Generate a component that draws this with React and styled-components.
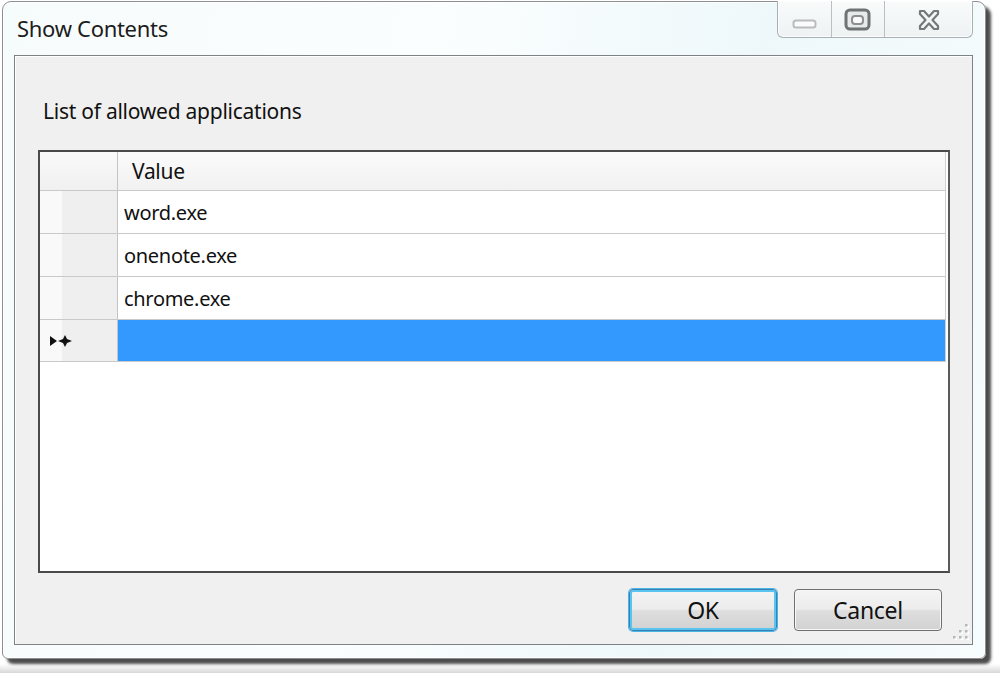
import React from 'react'
import styled, { createGlobalStyle } from 'styled-components'

const Global = createGlobalStyle`
  html, body {
    margin: 0;
    padding: 0;
    background: #ffffff;
    width: 1000px;
    height: 673px;
    overflow: hidden;
    font-family: "Open Sans", "Noto Sans", sans-serif;
  }
`

const Page = styled.div`
  width: 1000px;
  height: 673px;
  padding: 1px 0 0 2px;
  box-sizing: border-box;
  background: linear-gradient(to bottom, #ffffff 0, #ffffff 664px, #d8d8d8 673px);
`

const Frame = styled.div`
  width: 984px;
  height: 658px;
  box-sizing: border-box;
  border: 1px solid #8c8f92;
  border-radius: 9px 9px 6px 6px;
  background: linear-gradient(100deg, #f6fbfc 0%, #fbfeff 40%, #eef8fa 70%, #f7fcfd 100%);
  box-shadow: 5px 5px 3px rgba(0, 0, 0, 0.7), inset 0 0 0 1px #ffffff;
  display: flex;
  flex-direction: column;
  padding: 0 12px 13px 11px;
`

const TitleBar = styled.div`
  height: 53px;
  display: flex;
  align-items: flex-start;
  justify-content: space-between;
`

const Title = styled.div`
  padding: 12px 0 0 3px;
  font-family: "Noto Sans", "Open Sans", sans-serif;
  font-size: 22px;
  line-height: 28px;
  color: #1c1c1c;
  letter-spacing: -0.3px;
  text-shadow: 0 0 6px rgba(255, 255, 255, 0.9);
`

const Caption = styled.div`
  display: flex;
  height: 36px;
  margin-top: -1px;
  border: 1px solid #a9b0b4;
  border-top: none;
  border-radius: 0 0 6px 6px;
  background: linear-gradient(to bottom, #f9fbfb, #eef2f3);
  box-shadow: inset 0 0 0 1px rgba(255, 255, 255, 0.8);
  overflow: hidden;
`

const CapButton = styled.div`
  width: ${({ w }) => w}px;
  height: 100%;
  display: flex;
  align-items: center;
  justify-content: center;
  padding-top: ${({ low }) => (low ? '10px' : '1px')};
  box-sizing: border-box;
  border-left: ${({ first }) => (first ? 'none' : '1px solid #b9bfc2')};
`

const Client = styled.div`
  flex: 1;
  position: relative;
  background: #f0f0f0;
  border: 1px solid #7e8286;
  box-shadow: inset 1px 1px 0 #ffffff;
  display: flex;
  flex-direction: column;
  padding: 0 22px 12px 23px;
  font-family: "Noto Sans", "Open Sans", sans-serif;
`

const Label = styled.div`
  margin: 41px 0 0 5px;
  font-size: 21px;
  line-height: 28px;
  color: #111;
  letter-spacing: -0.25px;
`

const Grid = styled.div`
  margin-top: 25px;
  height: 423px;
  box-sizing: border-box;
  border: 2px solid #4a4a4a;
  border-right-color: #5a5a5a;
  background: #ffffff;
  display: flex;
  flex-direction: column;
  padding-right: 2px;
`

const Row = styled.div`
  display: flex;
  height: ${({ h }) => h}px;
  border-bottom: 1px solid #c9c9c9;
  box-sizing: border-box;
`

const RowHead = styled.div`
  width: 78px;
  flex: none;
  border-right: 1px solid #c4c4c4;
  background: ${({ header }) =>
    header
      ? 'linear-gradient(to bottom, #fafafa, #f0f0f0)'
      : 'linear-gradient(to right, #f9f9f9 0, #f9f9f9 22px, #efefef 22px)'};
  display: flex;
  align-items: center;
  padding-left: 9px;
  box-sizing: border-box;
`

const Cell = styled.div`
  flex: 1;
  display: flex;
  align-items: center;
  padding-left: ${({ header }) => (header ? '14px' : '6px')};
  font-size: ${({ header }) => (header ? '21px' : '20px')};
  letter-spacing: -0.3px;
  color: #111;
  background: ${({ selected, header }) =>
    selected ? '#3399ff' : header ? 'linear-gradient(to bottom, #fbfbfb, #f1f1f1)' : '#ffffff'};
  border-right: 1px solid #d0d0d0;
`

const Buttons = styled.div`
  margin-top: 16px;
  display: flex;
  justify-content: flex-end;
  gap: 17px;
  padding-right: 8px;
`

const Button = styled.div`
  width: 148px;
  height: 42px;
  box-sizing: border-box;
  border-radius: 4px;
  border: 1px solid ${({ focused }) => (focused ? '#3c7fb1' : '#707070')};
  box-shadow: ${({ focused }) =>
    focused ? '0 0 0 1px #48b4e8, inset 0 0 0 2px #5ac4f0' : 'inset 0 0 0 1px #f8f8f8'};
  background: linear-gradient(to bottom, #f4f4f4 0%, #ececec 48%, #dedede 52%, #d2d2d2 100%);
  display: flex;
  align-items: center;
  justify-content: center;
  font-size: 23px;
  color: #111;
  letter-spacing: -0.3px;
`

const Grip = styled.svg`
  position: absolute;
  right: 2px;
  bottom: 3px;
`

const rows = ['word.exe', 'onenote.exe', 'chrome.exe']

function Grippy() {
  const dots = [
    [12, 0],
    [6, 6],
    [12, 6],
    [0, 12],
    [6, 12],
    [12, 12],
  ]
  return (
    <Grip width="17" height="17" viewBox="0 0 17 17">
      {dots.map(([x, y]) => (
        <g key={`${x}-${y}`}>
          <rect x={x + 1.5} y={y + 1.5} width="2.5" height="2.5" fill="#ffffff" />
          <rect x={x} y={y} width="2.5" height="2.5" fill="#b4b8bb" />
        </g>
      ))}
    </Grip>
  )
}

export default function App() {
  return (
    <Page>
      <Global />
      <Frame>
        <TitleBar>
          <Title>Show Contents</Title>
          <Caption>
            <CapButton w={53} first low>
              <svg width="26" height="12" viewBox="0 0 26 12">
                <rect x="1.5" y="2.5" width="22" height="7" rx="2.5" fill="#fbfbfb" stroke="#b8bcbf" strokeWidth="2" />
              </svg>
            </CapButton>
            <CapButton w={53}>
              <svg width="28" height="24" viewBox="0 0 28 24">
                <rect x="2" y="2" width="23" height="19" rx="4" fill="#e7e9ea" stroke="#6f7376" strokeWidth="3" />
                <rect x="8" y="8" width="11" height="8" rx="3" fill="#fafafa" stroke="#8b8f92" strokeWidth="2" />
              </svg>
            </CapButton>
            <CapButton w={88}>
              <svg width="28" height="24" viewBox="0 0 28 24">
                <path
                  d="M5 3 L9 3 L14 8.5 L19 3 L23 3 L23 6 L17.5 12 L23 18 L23 21 L19 21 L14 15.5 L9 21 L5 21 L5 18 L10.5 12 L5 6 Z"
                  fill="#f4f5f5"
                  stroke="#75797c"
                  strokeWidth="2.2"
                  strokeLinejoin="round"
                />
              </svg>
            </CapButton>
          </Caption>
        </TitleBar>
        <Client>
          <Label>List of allowed applications</Label>
          <Grid>
            <Row h={39}>
              <RowHead header />
              <Cell header>Value</Cell>
            </Row>
            {rows.map((r) => (
              <Row h={43} key={r}>
                <RowHead />
                <Cell>{r}</Cell>
              </Row>
            ))}
            <Row h={42}>
              <RowHead>
                <svg width="28" height="14" viewBox="0 0 28 14">
                  <path d="M1 2 L8 7 L1 12 Z" fill="#111" />
                  <path d="M16 1 L18 5 L23 7 L18 9 L16 13 L14 9 L9 7 L14 5 Z" fill="#111" />
                </svg>
              </RowHead>
              <Cell selected />
            </Row>
          </Grid>
          <Buttons>
            <Button focused>OK</Button>
            <Button>Cancel</Button>
          </Buttons>
          <Grippy />
        </Client>
      </Frame>
    </Page>
  )
}
